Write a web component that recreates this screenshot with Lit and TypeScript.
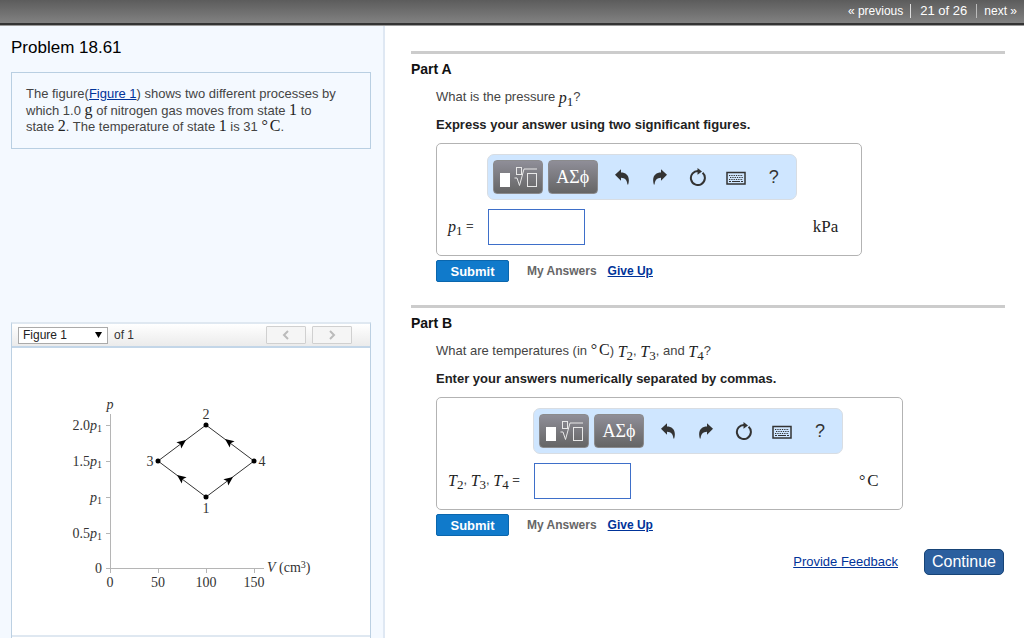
import { LitElement, html, css, svg, nothing } from "lit";
import { customElement, property } from "lit/decorators.js";

const base = css`
  *, *::before, *::after { box-sizing: border-box; }
  button, input, select { font-family: inherit; margin: 0; }
  .m { font-family: "Liberation Serif", serif; font-size: 16px; line-height: 1; color: #222; }
  .v { font-style: italic; }
  .m sub { font-size: 13px; line-height: 1; vertical-align: -3px; font-style: normal; }
  .low { vertical-align: -2px; }
  .deg { font-size: 16px; margin-right: 2px; }
`;

const variable = (name: string, index: number) =>
  html`<span class="m low"><span class="v">${name}</span><sub>${index}</sub></span>`;
const celsius = html`<span class="m"><span class="deg">°</span>C</span>`;

@customElement("math-toolbar")
class MathToolbar extends LitElement {
  static styles = [base, css`
    :host { display: flex; align-items: center; padding: 5px 3px 5px 5px;
      background: #cfe6ff; border: 1px solid #d8dde3; border-radius: 7px; }
    .key { width: 50px; height: 34px; padding: 0; margin-right: 5px; border: 1px solid #8b8b8d;
      border-radius: 4px; color: #fff; background: linear-gradient(#8f8e98, #656565);
      font: 18px "Liberation Serif", serif; display: grid; place-items: center; }
    .icon { width: 38px; height: 34px; padding: 0; border: 0; background: none; color: #333;
      display: grid; place-items: center; font-size: 18px; }
  `];
  render() {
    return html`
      <button class="key" aria-label="Templates">
        <svg width="40" height="24" viewBox="0 0 40 24" fill="none" stroke="#e8e8e8">
          <rect x="2" y="8" width="10" height="14" fill="#fff" stroke="none"></rect>
          <rect x="18.500" y="2.500" width="5" height="7"></rect>
          <path d="M16.500 13h2.500l2.500 7.500 4.500-16.500h13"></path>
          <rect x="29.500" y="8.500" width="9" height="13"></rect>
        </svg>
      </button>
      <button class="key" aria-label="Symbols">ΑΣϕ</button>
      <button class="icon" aria-label="Undo">
        <svg width="16" height="16" viewBox="0 0 16 16" fill="currentColor">
          <path d="M1 5.800 7 .2v3.300c5.500 0 9.500 4 7.200 12h-.8C13.200 11.300 11 9 7 8.800v3z"></path>
        </svg>
      </button>
      <button class="icon" aria-label="Redo">
        <svg width="16" height="16" viewBox="0 0 16 16" fill="currentColor">
          <path d="M15 5.800 9 .2v3.300c-5.500 0-9.500 4-7.200 12h.8C2.800 11.300 5 9 9 8.800v3z"></path>
        </svg>
      </button>
      <button class="icon" aria-label="Reset">
        <svg width="18" height="18" viewBox="0 0 18 18">
          <path d="M9.500 3A7 7 0 1 0 13.600 4.800" fill="none" stroke="currentColor" stroke-width="2"></path>
          <path d="M8.500 0v6.800L13 3.600z" fill="currentColor"></path>
        </svg>
      </button>
      <button class="icon" aria-label="Keyboard shortcuts">
        <svg width="20" height="18" viewBox="0 0 20 18" fill="none" stroke="currentColor">
          <rect x="1" y="4.500" width="18" height="11.500" stroke-width="1.500"></rect>
          <path d="M3 7.500h14M4 9.500h13M3 11.500h14" stroke-dasharray="1.300 1"></path>
          <path d="M3 13.500h2M6 13.500h8M15 13.500h2"></path>
        </svg>
      </button>
      <button class="icon" aria-label="Help">?</button>
    `;
  }
}

@customElement("problem-part")
class ProblemPart extends LitElement {
  @property() name = "";
  @property({ attribute: false }) question: unknown = nothing;
  @property() instruction = "";
  @property({ attribute: false }) symbol: unknown = nothing;
  @property({ attribute: false }) unit: unknown = nothing;
  static styles = [base, css`
    :host { display: block; border-top: 3px solid #ccc; padding-top: 5px; }
    .title { margin: 0 0 8px; font-size: 14px; line-height: 20px; font-weight: bold; color: #111; }
    .body { padding-left: 25px; }
    .text { margin: 0 0 8px; line-height: 20px; height: 20px; white-space: nowrap; }
    .strong { font-weight: bold; color: #222; }
    .answer { display: inline-grid; grid-template-columns: repeat(3, auto); align-items: center;
      row-gap: 9px; padding: 10px 23px 10px 11px; border: 1px solid #b3b3b3; border-radius: 5px;
      vertical-align: top; }
    .tools { grid-column: 2; }
    .label { grid-column: 1; padding-right: 13px; }
    .field { width: 97px; height: 36px; margin-left: 1px; padding: 0 6px; font-size: 16px;
      border: 1px solid #3e6fc9; background: #fff; border-radius: 0; }
    .unit { padding-left: 16px; }
    .unit .m { font-size: 17px; }
    .actions { display: flex; align-items: center; margin-top: 4px; font-weight: bold; font-size: 12px; }
    .submit { width: 73px; height: 22px; padding: 0; border: 1px solid #0a66ad; border-radius: 2px;
      background: #107acb; color: #fff; font-size: 13px; font-weight: bold; }
    .mine { margin-left: 18px; color: #666; text-decoration: none; }
    .give { margin-left: 11px; color: #039; }
  `];
  render() {
    return html`
      <h2 class="title">${this.name}</h2>
      <div class="body">
        <p class="text">${this.question}</p>
        <p class="text strong">${this.instruction}</p>
        <div class="answer">
          <math-toolbar class="tools"></math-toolbar>
          <label class="label" for="answer">${this.symbol} =</label>
          <input class="field" id="answer" type="text">
          <span class="unit">${this.unit}</span>
        </div>
        <div class="actions">
          <button class="submit">Submit</button>
          <a class="mine" href="#answers">My Answers</a>
          <a class="give" href="#give-up">Give Up</a>
        </div>
      </div>
    `;
  }
}

@customElement("pv-diagram")
class PvDiagram extends LitElement {
  static styles = css`
    :host { display: block; }
    .plot { display: block; }
    .axis { stroke: #b5b5b5; fill: none; }
    .path { stroke: #333; fill: none; }
    .t { font: 14px "Liberation Serif", serif; fill: #333; }
    .i { font-style: italic; }
    .s { font-size: 10px; }
    .end { text-anchor: end; }
    .mid { text-anchor: middle; }
  `;
  render() {
    const rows: [string, number, boolean][] = [["2.0", 77, true], ["1.5", 113, true], ["", 149, true], ["0.5", 185, true], ["0", 220, false]];
    const cols: [string, number][] = [["0", 98], ["50", 146], ["100", 194], ["150", 242]];
    const dots = [[194, 77], [146, 113], [242, 113], [194, 149]];
    const arrows = [[174, 92, -37], [213, 91, -143], [165, 127, -143], [221, 129, -37]];
    return html`
      <svg class="plot" width="358" height="287" viewBox="0 0 358 287" role="img" aria-label="Pressure against volume">
        <path class="axis" d="M98.500 66V225M94 220.500H252"></path>
        ${rows.slice(0, 4).map(([, y]) => svg`<path class="axis" d=${`M94 ${y + 0.5}h4`}></path>`)}
        ${cols.slice(1).map(([, x]) => svg`<path class="axis" d=${`M${x + 0.5} 220v5`}></path>`)}
        ${rows.map(([n, y, p]) => svg`<text class="t end" x="90" y=${y + 5}>${n}${p ? svg`<tspan class="i">p</tspan><tspan class="s" dy="2">1</tspan>` : nothing}</text>`)}
        ${cols.map(([n, x]) => svg`<text class="t mid" x=${x} y="239">${n}</text>`)}
        <text class="t i mid" x="98" y="61">p</text>
        <text class="t" x="255" y="224"><tspan class="i">V</tspan> (cm<tspan class="s" dy="-4">3</tspan><tspan dy="4">)</tspan></text>
        <path class="path" d="M194 149 146 113 194 77 242 113Z"></path>
        ${dots.map(([x, y]) => svg`<circle cx=${x} cy=${y} r="2.500"></circle>`)}
        ${arrows.map(([x, y, a]) => svg`<path d="M0 0-9-4-7 0-9 4Z" transform=${`translate(${x} ${y}) rotate(${a})`}></path>`)}
        <text class="t mid" x="194" y="71">2</text>
        <text class="t mid" x="138" y="118">3</text>
        <text class="t mid" x="250" y="118">4</text>
        <text class="t mid" x="194" y="165">1</text>
      </svg>
    `;
  }
}

@customElement("app-root")
class AppRoot extends LitElement {
  static styles = [base, css`
    :host { display: flex; flex-direction: column; min-height: 100vh; background: #fff; color: #444;
      font: 13px/16px "Liberation Sans", Arial, sans-serif; }
    .bar { height: 26px; flex: none; display: flex; justify-content: flex-end; align-items: center;
      padding: 0 7px 4px 0; background: linear-gradient(#5c5c5c, #858585);
      border-bottom: 1px solid #999; box-shadow: inset 0 -2px #333; color: #fff; }
    .nav { color: #fff; text-decoration: none; font-size: 12px; }
    .count { margin: 0 7px; padding: 0 9px; border-left: 1px solid #ddd;
      border-right: 1px solid #bbb; line-height: 14px; }
    .page { flex: 1; display: flex; }
    .side { flex: 0 0 385px; display: flex; flex-direction: column; justify-content: space-between;
      padding: 12px 12px 0 11px; background: #f4f9ff; border-right: 2px solid #dfe8f3; }
    .heading { margin: 0 0 14px; font-size: 17px; line-height: 20px; font-weight: normal; color: #000; }
    .intro { margin: 0; padding: 13px 14px 14px; border: 1px solid #b9cfe2; line-height: 16px; }
    .intro .line { display: block; height: 16px; white-space: nowrap; }
    .link { color: #039; }
    .panel { border: 1px solid #bcd0e2; border-top: 2px solid #dfe8f1; border-bottom: 0; background: #fff; }
    .tools { display: flex; align-items: center; height: 24px; padding: 0 18px 0 6px; gap: 6px;
      background: linear-gradient(#fff, #ebebeb); border-bottom: 2px solid #c3d6e8; font-size: 12px; color: #333; }
    .pick { display: grid; align-items: center; width: 90px; }
    .select { grid-area: 1 / 1; appearance: none; height: 17px; padding: 0 4px; font-size: 12px;
      line-height: 15px; color: #222; border: 1px solid #aaa; border-radius: 0; background: #fff; }
    .caret { grid-area: 1 / 1; justify-self: end; margin-right: 6px; pointer-events: none; }
    .step { width: 40px; height: 18px; padding: 0; border: 1px solid #d0d0d0; border-radius: 1px;
      background: #f5f5f5; display: grid; place-items: center; }
    .step.first { margin-left: auto; }
    .foot { height: 3px; border-top: 2px solid #dfe8f1; }
    .main { flex: 1; min-width: 0; padding: 25px 19px 0 26px; }
    .partb { margin-top: 23px; }
    .finish { display: flex; justify-content: flex-end; align-items: center; gap: 26px;
      margin-top: 13px; padding-right: 1px; }
    .continue { width: 80px; height: 26px; padding: 0; border: 1px solid #174477; border-radius: 5px;
      background: #2b5f9e; color: #fff; font-size: 16px; }
  `];
  render() {
    return html`
      <header class="bar">
        <a class="nav" href="#previous">« previous</a>
        <span class="count">21 of 26</span>
        <a class="nav" href="#next">next »</a>
      </header>
      <div class="page">
        <aside class="side">
          <div>
            <h1 class="heading">Problem 18.61</h1>
            <p class="intro">
              <span class="line">The figure(<a class="link" href="#figure">Figure 1</a>) shows two different processes by</span>
              <span class="line">which 1.0 <span class="m">g</span> of nitrogen gas moves from state <span class="m">1</span> to</span>
              <span class="line">state <span class="m">2</span>. The temperature of state <span class="m">1</span> is 31 ${celsius}.</span>
            </p>
          </div>
          <section class="panel" id="figure">
            <div class="tools">
              <div class="pick">
                <select class="select" id="pick" aria-labelledby="pick of"><option>Figure 1</option></select>
                <svg class="caret" width="7" height="6" viewBox="0 0 7 6"><path d="M0 0h7L3.500 6z"></path></svg>
              </div>
              <label id="of" for="pick">of 1</label>
              <button class="step first" aria-label="Previous figure">
                <svg width="8" height="10" viewBox="0 0 8 10" fill="none" stroke="#bbb" stroke-width="2"><path d="M6 1 2 5l4 4"></path></svg>
              </button>
              <button class="step" aria-label="Next figure">
                <svg width="8" height="10" viewBox="0 0 8 10" fill="none" stroke="#bbb" stroke-width="2"><path d="m2 1 4 4-4 4"></path></svg>
              </button>
            </div>
            <pv-diagram></pv-diagram>
            <div class="foot"></div>
          </section>
        </aside>
        <main class="main">
          <problem-part name="Part A"
            .question=${html`What is the pressure ${variable("p", 1)}?`}
            instruction="Express your answer using two significant figures."
            .symbol=${variable("p", 1)}
            .unit=${html`<span class="m">kPa</span>`}></problem-part>
          <problem-part class="partb" name="Part B"
            .question=${html`What are temperatures (in ${celsius}) ${variable("T", 2)}, ${variable("T", 3)}, and ${variable("T", 4)}?`}
            instruction="Enter your answers numerically separated by commas."
            .symbol=${html`${variable("T", 2)}, ${variable("T", 3)}, ${variable("T", 4)}`}
            .unit=${celsius}></problem-part>
          <div class="finish">
            <a class="link" href="#feedback">Provide Feedback</a>
            <button class="continue">Continue</button>
          </div>
        </main>
      </div>
    `;
  }
}
